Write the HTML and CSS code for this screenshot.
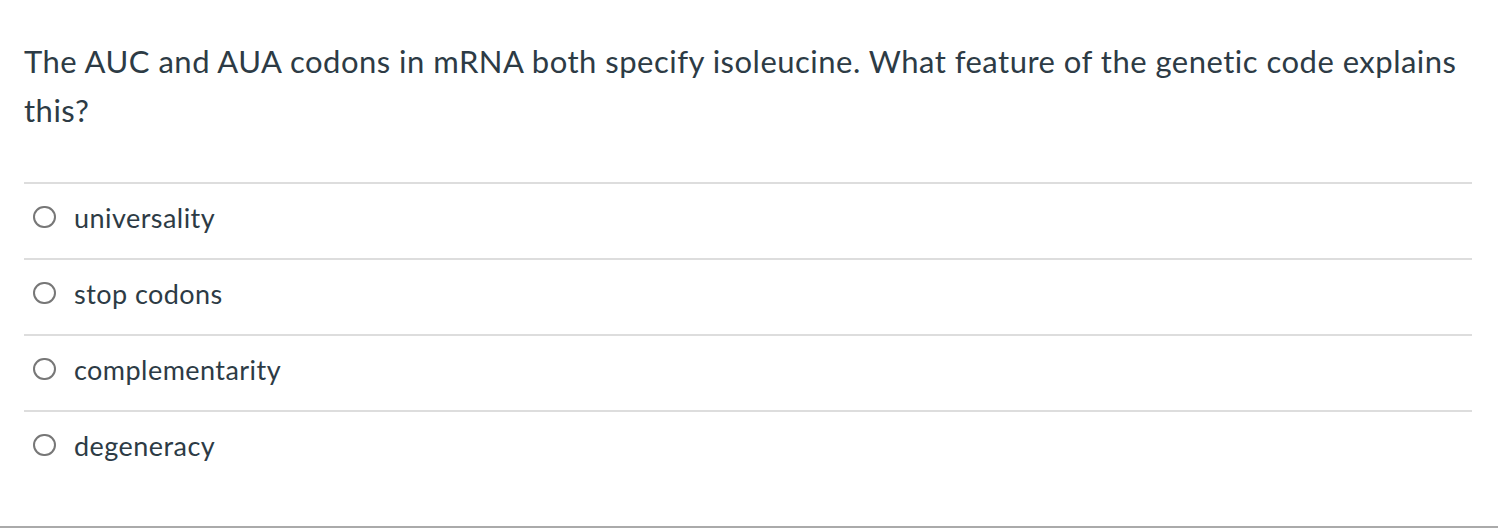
FILE: index.html
```html
<!DOCTYPE html>
<html>
<head>
<meta charset="utf-8">
<link rel="stylesheet" href="styles.css">
</head>
<body>
<div class="quiz">
  <div class="question">The AUC and AUA codons in mRNA both specify isoleucine. What feature of the genetic code explains this?</div>
  <div class="answers">
    <label class="answer"><span class="radio"></span><span class="label">universality</span></label>
    <label class="answer"><span class="radio"></span><span class="label">stop codons</span></label>
    <label class="answer"><span class="radio"></span><span class="label">complementarity</span></label>
    <label class="answer"><span class="radio"></span><span class="label">degeneracy</span></label>
  </div>
</div>
</body>
</html>
```

FILE: styles.css
```css
html, body {
  margin: 0;
  padding: 0;
  background: #fff;
}
body {
  font-family: Lato, "Open Sans", sans-serif;
  color: #2d3b45;
  width: 1498px;
  height: 528px;
  overflow: hidden;
}
.quiz {
  height: 526px;
  border-bottom: 2px solid #aaaaaa;
}
.question {
  padding: 37px 20px 0 24px;
  font-size: 31px;
  letter-spacing: 0.49px;
  line-height: 49px;
  height: 182px;
  box-sizing: border-box;
}
.answers {
  margin: 0 26px 0 24px;
}
.answer {
  display: flex;
  align-items: center;
  height: 66px;
  padding-bottom: 8px;
  box-sizing: content-box;
  border-top: 2px solid #dddddd;
}
.radio {
  width: 18.5px;
  height: 18.5px;
  border: 2px solid #777;
  border-radius: 50%;
  margin-left: 9px;
  margin-right: 18.5px;
  flex: none;
}
.label {
  font-size: 27px;
  letter-spacing: 0.45px;
}
```
